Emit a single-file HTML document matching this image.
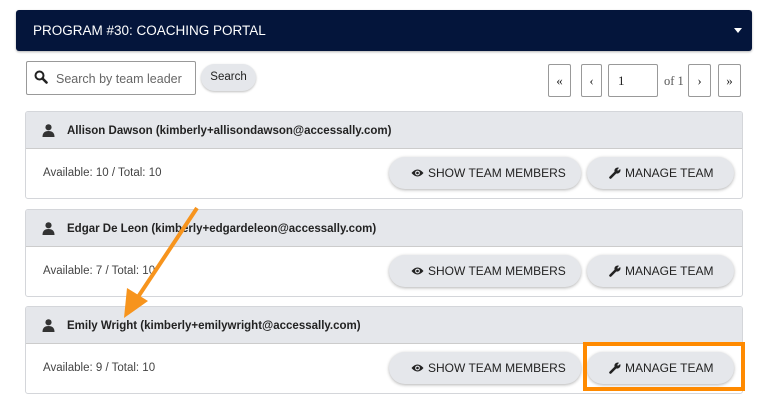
<!DOCTYPE html>
<html><head><style>
*{box-sizing:border-box;margin:0;padding:0}
body{width:768px;height:401px;background:#fff;font-family:"Liberation Sans",sans-serif;position:relative;overflow:hidden;color:#222}
.hdr{position:absolute;left:16px;top:10px;width:736px;height:41px;background:#04153b;border-radius:3px;color:#fff;font-size:13.5px;padding:13px 0 0 17px;box-shadow:0 1px 2px rgba(0,0,0,.3)}
.caret{position:absolute;right:10px;top:18px;width:0;height:0;border-left:4px solid transparent;border-right:4px solid transparent;border-top:5px solid #fff}
.inp{position:absolute;left:26px;top:61px;width:170px;height:34px;border:1px solid #999;border-radius:2px;font-size:12.5px;color:#666;padding:10px 0 0 29px}
.sbtn{position:absolute;left:201px;top:64px;width:55px;height:27px;background:#e5e7eb;border-radius:14px;font-size:11.5px;text-align:center;line-height:26px;box-shadow:0 1px 2px rgba(0,0,0,.25)}
.pg{position:absolute;top:64px;height:33px;border:1px solid #999;border-radius:2px;font-family:"Liberation Serif",serif;font-size:13px;text-align:center;line-height:31px}
.card{position:absolute;left:25px;width:718px;height:88px;border:1px solid #d4d6da;border-radius:3px;overflow:hidden}
.ch{height:37px;background:#e5e7eb;border-bottom:1px solid #ccc;font-size:11.5px;font-weight:bold;padding:13px 0 0 41px;position:relative}
.ch svg{position:absolute;left:16px;top:12px}
.cb{position:relative;height:50px;font-size:11.5px;color:#444;padding:18px 0 0 17px}
.btn{position:absolute;top:8px;height:32px;background:#e5e7eb;border-radius:16px;font-size:12px;color:#222;line-height:32px;box-shadow:0 1px 3px rgba(0,0,0,.3)}
.btn svg{position:absolute;top:10px}
.b1{left:363px;width:192px;padding-left:39px}.b2{left:561px;width:147px;padding-left:38px}
</style></head><body>
<div class="hdr">PROGRAM #30: COACHING PORTAL<div class="caret"></div></div>
<div class="inp"><svg style="position:absolute;left:7px;top:8px" width="14" height="14" viewBox="0 0 14 14"><circle cx="5.5" cy="5.5" r="4" fill="none" stroke="#222" stroke-width="2"/><path d="M8.5 8.5L12.5 12.5" stroke="#222" stroke-width="2.6" stroke-linecap="round"/></svg>Search by team leader</div>
<div class="sbtn">Search</div>
<div class="pg" style="left:548px;width:23px">«</div>
<div class="pg" style="left:581px;width:21px">‹</div>
<div class="pg" style="left:608px;width:50px;text-align:left;padding-left:9px">1</div>
<div style="position:absolute;left:664px;top:74px;font-family:'Liberation Serif',serif;font-size:12.5px;color:#555">of 1</div>
<div class="pg" style="left:688px;width:23px">›</div>
<div class="pg" style="left:718px;width:23px">»</div>

<div class="card" style="top:111px"><div class="ch"><svg width="13" height="13" viewBox="0 0 13 13"><circle cx="6.5" cy="3.3" r="3.1" fill="#333"/><path d="M0.5 13 Q0.5 7 6.5 7 Q12.5 7 12.5 13Z" fill="#333"/></svg>Allison Dawson (kimberly+allisondawson@accessally.com)</div>
<div class="cb">Available: 10 / Total: 10<div class="btn b1"><svg style="left:22px" width="13" height="12" viewBox="0 0 13 12"><path d="M0.5 6 Q6.5 -1 12.5 6 Q6.5 13 0.5 6Z" fill="#222"/><circle cx="6.5" cy="6" r="2.4" fill="#e5e7eb"/><circle cx="6.5" cy="6" r="1.3" fill="#222"/></svg>SHOW TEAM MEMBERS</div><div class="btn b2"><svg style="left:22px" width="12" height="12" viewBox="0 0 12 12"><path d="M1.5 10.5 L6.5 5.5" stroke="#222" stroke-width="2.6" stroke-linecap="round"/><path d="M5.5 4.5 A3.3 3.3 0 0 1 10 0.8 L8.2 3 L9 3.8 L11.2 2 A3.3 3.3 0 0 1 7.5 6.5Z" fill="#222"/></svg>MANAGE TEAM</div></div></div>
<div class="card" style="top:209px"><div class="ch"><svg width="13" height="13" viewBox="0 0 13 13"><circle cx="6.5" cy="3.3" r="3.1" fill="#333"/><path d="M0.5 13 Q0.5 7 6.5 7 Q12.5 7 12.5 13Z" fill="#333"/></svg>Edgar De Leon (kimberly+edgardeleon@accessally.com)</div>
<div class="cb">Available: 7 / Total: 10<div class="btn b1"><svg style="left:22px" width="13" height="12" viewBox="0 0 13 12"><path d="M0.5 6 Q6.5 -1 12.5 6 Q6.5 13 0.5 6Z" fill="#222"/><circle cx="6.5" cy="6" r="2.4" fill="#e5e7eb"/><circle cx="6.5" cy="6" r="1.3" fill="#222"/></svg>SHOW TEAM MEMBERS</div><div class="btn b2"><svg style="left:22px" width="12" height="12" viewBox="0 0 12 12"><path d="M1.5 10.5 L6.5 5.5" stroke="#222" stroke-width="2.6" stroke-linecap="round"/><path d="M5.5 4.5 A3.3 3.3 0 0 1 10 0.8 L8.2 3 L9 3.8 L11.2 2 A3.3 3.3 0 0 1 7.5 6.5Z" fill="#222"/></svg>MANAGE TEAM</div></div></div>
<div class="card" style="top:306px"><div class="ch"><svg width="13" height="13" viewBox="0 0 13 13"><circle cx="6.5" cy="3.3" r="3.1" fill="#333"/><path d="M0.5 13 Q0.5 7 6.5 7 Q12.5 7 12.5 13Z" fill="#333"/></svg>Emily Wright (kimberly+emilywright@accessally.com)</div>
<div class="cb">Available: 9 / Total: 10<div class="btn b1"><svg style="left:22px" width="13" height="12" viewBox="0 0 13 12"><path d="M0.5 6 Q6.5 -1 12.5 6 Q6.5 13 0.5 6Z" fill="#222"/><circle cx="6.5" cy="6" r="2.4" fill="#e5e7eb"/><circle cx="6.5" cy="6" r="1.3" fill="#222"/></svg>SHOW TEAM MEMBERS</div><div class="btn b2"><svg style="left:22px" width="12" height="12" viewBox="0 0 12 12"><path d="M1.5 10.5 L6.5 5.5" stroke="#222" stroke-width="2.6" stroke-linecap="round"/><path d="M5.5 4.5 A3.3 3.3 0 0 1 10 0.8 L8.2 3 L9 3.8 L11.2 2 A3.3 3.3 0 0 1 7.5 6.5Z" fill="#222"/></svg>MANAGE TEAM</div></div></div>

<div style="position:absolute;left:583px;top:342px;width:162px;height:49px;border:4px solid #ff8a00"></div>
<svg style="position:absolute;left:0;top:0" width="768" height="401"><path d="M197 208 L136 300" stroke="#f7941d" stroke-width="4" fill="none"/><path d="M124 318 L127 288 L148 301Z" fill="#f7941d"/></svg>
</body></html>
